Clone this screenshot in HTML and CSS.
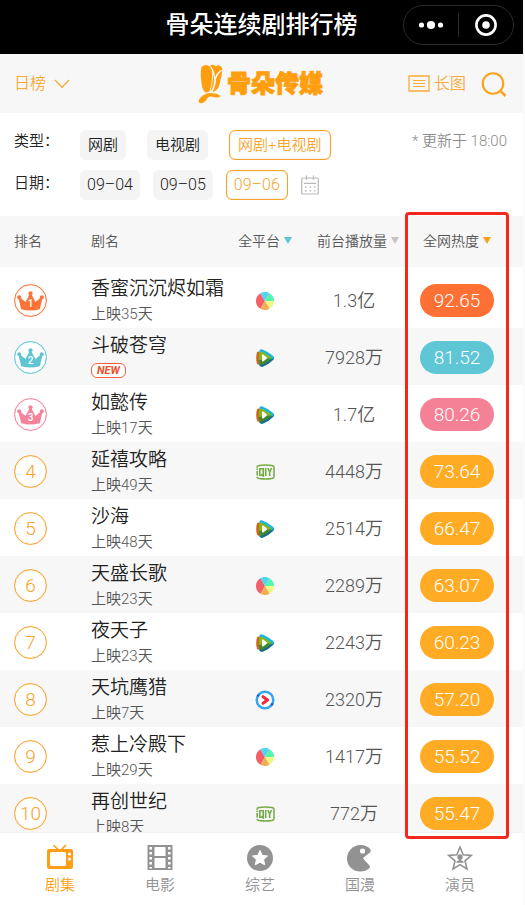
FILE: index.html
```html
<!DOCTYPE html>
<html lang="zh-CN">
<head>
<meta charset="utf-8">
<meta name="viewport" content="width=device-width, initial-scale=1">
<title>骨朵连续剧排行榜</title>
<link rel="stylesheet" href="styles.css">
</head>
<body>
<svg class="sprite" aria-hidden="true">
  <symbol id="crown" viewBox="0 0 27 20">
    <path d="M1.500 7 2.800 6.200 8.600 11 12.200 4h2.600L18.400 11 24.200 6.200 25.500 7 22.800 18.200Q13.500 20.600 4.200 18.200Z"/>
    <circle cx="13.500" cy="2.300" r="2.100"/><circle cx="2.200" cy="6.200" r="2"/><circle cx="24.800" cy="6.200" r="2"/>
  </symbol>
  <symbol id="pie" viewBox="-9 -9 18 18">
    <path fill="#f26168" d="M0 0-4.500-7.800A9 9 0 0 0-4.500 7.800Z"/>
    <path fill="#4fd5f2" d="M0 0-4.500-7.800A9 9 0 0 1 4.500-7.800Z"/>
    <path fill="#55f5ae" d="M0 0 4.500-7.800A9 9 0 0 1 9 0Z"/>
    <path fill="#f2f785" d="M0 0H9A9 9 0 0 1 4.500 7.800Z"/>
    <path fill="#f5ad55" d="M0 0 4.500 7.800A9 9 0 0 1-4.500 7.800Z"/>
  </symbol>
  <symbol id="tencent" viewBox="0 0 18 18">
    <path fill="#22b5dc" d="M3.500 1.200Q4 0 6.500.4 13 2.800 17.200 7 19 9 17.200 10.700 12.500 15.500 6.500 17.700 3.800 18 3.300 16Z"/>
    <path fill="#1b6d84" d="M3.300 14 18 9.300Q17.800 10.200 17.200 10.700 12.500 15.500 6.500 17.700 3.800 18 3.300 16Z"/>
    <path fill="#cf6420" d="M1 3.200Q1.500 2.400 3.800 2.700V15.600Q1.700 15.800 1 14.800-.6 9 1 3.200Z"/>
    <path fill="#86b81b" d="M3.300 3.300Q4 2.300 6 3 11.500 5.200 14.500 8 15.300 9 14.500 10 11.500 13 6 15.200 3.800 15.700 3.300 14.500 2.300 9 3.300 3.300Z"/>
    <path fill="#40872d" d="M3 11 14.800 9.300 14.500 10Q11.500 13 6 15.200 3.800 15.700 3.300 14.500Z"/>
    <path fill="#fff" d="M6 5.800Q6.300 5.100 7.200 5.600L10.600 8.200Q11.400 9 10.600 9.700L7.200 12.400Q6.200 12.900 6 12.100Z"/>
  </symbol>
  <symbol id="iqiyi" viewBox="0 0 19 16">
    <path fill="none" stroke="#74ab45" stroke-width="1.500" d="M1 3.800V3.300Q1 1.700 3 1.400 9.500.4 16 1.400 18 1.700 18 3.300V12.700Q18 14.300 16 14.600 9.500 15.600 3 14.600 1 14.300 1 12.700"/>
    <path fill="none" stroke="#74ab45" stroke-width="1.600" d="M1.200 4.600V6M1.200 7V11.500M3.800 4.700H7.200V11.300H3.800ZM5.800 10 7.800 12.700M9.700 4V12M11.800 4 13.700 8V12M15.600 4 13.700 8"/>
  </symbol>
  <symbol id="youku" viewBox="0 0 20 20">
    <circle cx="10" cy="10" r="8.300" fill="#fff" stroke="#37a4f2" stroke-width="2.500"/>
    <circle cx="3.300" cy="5.500" r="1.300" fill="#1e62c8"/><circle cx="16.900" cy="14.400" r="1.300" fill="#1e62c8"/>
    <path fill="none" stroke="#f22b3c" stroke-width="3" stroke-linecap="round" stroke-linejoin="round" d="M8 6.700 12.600 10 8 13.300"/>
  </symbol>
</svg>

<div class="app">
  <header class="titlebar">
    <h1 class="titlebar-title">骨朵连续剧排行榜</h1>
    <div class="capsule">
      <button class="capsule-btn" type="button" aria-label="更多">
        <svg width="26" height="10" viewBox="0 0 26 10" fill="#fff"><circle cx="3.500" cy="5" r="2.600"/><circle cx="13" cy="5" r="4.100"/><circle cx="22.500" cy="5" r="2.600"/></svg>
      </button>
      <button class="capsule-btn" type="button" aria-label="关闭">
        <svg width="24" height="24" viewBox="0 0 24 24"><circle cx="12" cy="12" r="9.600" fill="none" stroke="#fff" stroke-width="2.600"/><circle cx="12" cy="12" r="3.800" fill="#fff"/></svg>
      </button>
    </div>
  </header>

  <div class="toolbar">
    <button class="tool period" type="button">日榜
      <svg width="16" height="10" viewBox="0 0 16 10" fill="none" stroke="#f9ab3a" stroke-width="1.300"><path d="M1 1 8 8.300 15 1"/></svg>
    </button>
    <div class="brand">
      <svg width="25" height="40" viewBox="0 0 25 40" fill="#ff9f0f">
        <path d="M3.500 3Q6 .5 9.500 1.200 12.500 2 13.600 5.500 14.500 8 14 13 13.800 21 12 26 10.500 29 7.500 28.500 4.500 27 3.500 19 2 9 3.500 3Z"/>
        <path d="M12 2Q14.500.2 16.500 1.200L18 2.200Q20.500.3 22.500 2.200 24.800 3.500 24.300 5.500 19 7.500 17 13.500 16.500 8 14.700 4.800 13.800 3 12 2Z"/>
        <path d="M24.300 6.500Q24 11 22.800 14.500L21.700 20Q20.500 26 14.300 28.300 17.500 23 18 15.500 19.500 9.500 24.300 6.500Z"/>
        <path d="M15.300 10Q17 16 15.500 21 14.500 25.500 12.500 27.800 14.800 20 15.300 10Z"/>
        <path d="M1 38.500Q-.5 35.500 5 31.500 10 28 16 29.500 21 30 22.500 32.300 21 34 17.500 33.500 12 31.500 10 33.500 7 38.500 3.500 39.300 1.500 39.500 1 38.500Z"/>
      </svg>
      <span class="brand-name">骨朵传媒</span>
    </div>
    <div class="tools">
      <button class="tool" type="button">
        <svg width="22" height="17" viewBox="0 0 22 17" fill="none" stroke="#f9ab3a"><path stroke-width="1.300" d="M1 1H21V16H1Z"/><path stroke-width="1.200" d="M5 5.500H17M5 8.500H17M5 11.500H17"/></svg>
        长图
      </button>
      <button class="tool" type="button" aria-label="搜索">
        <svg width="26" height="26" viewBox="0 0 26 26" fill="none" stroke="#fba21f" stroke-width="2.100"><circle cx="12" cy="12.500" r="10.300"/><path stroke-width="2.600" d="M18.700 19.200 24.500 25"/></svg>
      </button>
    </div>
  </div>

  <section class="filters">
    <div class="filter">
      <span class="filter-label">类型：</span>
      <div class="chips chips-type">
        <button class="chip" type="button">网剧</button>
        <button class="chip" type="button">电视剧</button>
        <button class="chip active" type="button">网剧+电视剧</button>
      </div>
      <span class="updated">* 更新于 18:00</span>
    </div>
    <div class="filter">
      <span class="filter-label date">日期：</span>
      <div class="chips chips-date">
        <button class="chip" type="button">09–04</button>
        <button class="chip" type="button">09–05</button>
        <button class="chip active" type="button">09–06</button>
        <button class="calendar" type="button" aria-label="选择日期">
          <svg width="18" height="20" viewBox="0 0 18 20" fill="none" stroke="#b9b9b9" stroke-width="1.200"><rect x=".7" y="3" width="16.600" height="16" rx="1"/><path d="M5.500.5V5M12.500.5V5M3 8.300H15"/><path stroke-width="1.600" stroke-dasharray="1.600 3" d="M4 12H14.500M4 15.700H14.500"/></svg>
        </button>
      </div>
    </div>
  </section>

  <main class="board">
    <table class="ranking">
      <colgroup><col class="col-rank"><col><col class="col-platform"><col class="col-plays"><col class="col-heat"></colgroup>
      <thead>
        <tr>
          <th class="rank">排名</th>
          <th class="name">剧名</th>
          <th>全平台<i class="sort blue"></i></th>
          <th class="plays-head">前台播放量<i class="sort grey"></i></th>
          <th class="heat">全网热度<i class="sort orange"></i></th>
        </tr>
      </thead>
      <tbody>
        <tr>
          <td class="rank"><span class="medal first"><svg width="27" height="20"><use href="#crown"/></svg><b>1</b></span></td>
          <td class="name"><div class="show">香蜜沉沉烬如霜</div><div class="days">上映35天</div></td>
          <td><svg class="platform" width="18" height="18"><use href="#pie"/></svg></td>
          <td class="plays">1.3亿</td>
          <td class="heat"><span class="pill first">92.65</span></td>
        </tr>
        <tr>
          <td class="rank"><span class="medal second"><svg width="27" height="20"><use href="#crown"/></svg><b>2</b></span></td>
          <td class="name"><div class="show">斗破苍穹</div><div class="days"><span class="new">NEW</span></div></td>
          <td><svg class="platform" width="18" height="18"><use href="#tencent"/></svg></td>
          <td class="plays">7928万</td>
          <td class="heat"><span class="pill second">81.52</span></td>
        </tr>
        <tr>
          <td class="rank"><span class="medal third"><svg width="27" height="20"><use href="#crown"/></svg><b>3</b></span></td>
          <td class="name"><div class="show">如懿传</div><div class="days">上映17天</div></td>
          <td><svg class="platform" width="18" height="18"><use href="#tencent"/></svg></td>
          <td class="plays">1.7亿</td>
          <td class="heat"><span class="pill third">80.26</span></td>
        </tr>
        <tr>
          <td class="rank"><span class="medal">4</span></td>
          <td class="name"><div class="show">延禧攻略</div><div class="days">上映49天</div></td>
          <td><svg class="platform" width="19" height="16"><use href="#iqiyi"/></svg></td>
          <td class="plays">4448万</td>
          <td class="heat"><span class="pill">73.64</span></td>
        </tr>
        <tr>
          <td class="rank"><span class="medal">5</span></td>
          <td class="name"><div class="show">沙海</div><div class="days">上映48天</div></td>
          <td><svg class="platform" width="18" height="18"><use href="#tencent"/></svg></td>
          <td class="plays">2514万</td>
          <td class="heat"><span class="pill">66.47</span></td>
        </tr>
        <tr>
          <td class="rank"><span class="medal">6</span></td>
          <td class="name"><div class="show">天盛长歌</div><div class="days">上映23天</div></td>
          <td><svg class="platform" width="18" height="18"><use href="#pie"/></svg></td>
          <td class="plays">2289万</td>
          <td class="heat"><span class="pill">63.07</span></td>
        </tr>
        <tr>
          <td class="rank"><span class="medal">7</span></td>
          <td class="name"><div class="show">夜天子</div><div class="days">上映23天</div></td>
          <td><svg class="platform" width="18" height="18"><use href="#tencent"/></svg></td>
          <td class="plays">2243万</td>
          <td class="heat"><span class="pill">60.23</span></td>
        </tr>
        <tr>
          <td class="rank"><span class="medal">8</span></td>
          <td class="name"><div class="show">天坑鹰猎</div><div class="days">上映7天</div></td>
          <td><svg class="platform" width="20" height="20"><use href="#youku"/></svg></td>
          <td class="plays">2320万</td>
          <td class="heat"><span class="pill">57.20</span></td>
        </tr>
        <tr>
          <td class="rank"><span class="medal">9</span></td>
          <td class="name"><div class="show">惹上冷殿下</div><div class="days">上映29天</div></td>
          <td><svg class="platform" width="18" height="18"><use href="#pie"/></svg></td>
          <td class="plays">1417万</td>
          <td class="heat"><span class="pill">55.52</span></td>
        </tr>
        <tr>
          <td class="rank"><span class="medal">10</span></td>
          <td class="name"><div class="show">再创世纪</div><div class="days">上映8天</div></td>
          <td><svg class="platform" width="19" height="16"><use href="#iqiyi"/></svg></td>
          <td class="plays">772万</td>
          <td class="heat"><span class="pill">55.47</span></td>
        </tr>
      </tbody>
    </table>
  </main>

  <nav class="tabs">
    <a class="tab current" href="#drama">
      <svg width="28" height="28" viewBox="0 0 28 28"><path fill="none" stroke="currentColor" stroke-width="1.600" d="M7.500 1 13 6.500M20 1 14.500 6.500"/><path fill="currentColor" fill-rule="evenodd" d="M3 5H25Q27 5 27 7V23Q27 25 25 25H3Q1 25 1 23V7Q1 5 3 5ZM5.500 8Q4 8 4 9.500V20.500Q4 22 5.500 22H18.500Q20 22 20 20.500V9.500Q20 8 18.500 8Z"/><circle cx="23.500" cy="10" r="1.500" fill="#fff"/><circle cx="23.500" cy="15" r="1.500" fill="#fff"/></svg>
      剧集</a>
    <a class="tab" href="#movie">
      <svg width="28" height="28" viewBox="0 0 28 28"><path fill="currentColor" d="M1.500 1H26.500V26H1.500Z"/><path fill="#fff" d="M8.500 3H19.500V12H8.500ZM8.500 14H19.500V24H8.500Z"/><path fill="none" stroke="#fff" stroke-width="2.600" stroke-dasharray="2.600 2.400" d="M4.700 3V24.500M23.300 3V24.500"/></svg>
      电影</a>
    <a class="tab" href="#variety">
      <svg width="28" height="28" viewBox="0 0 28 28"><circle cx="14" cy="14" r="13" fill="currentColor"/><path fill="#fff" stroke="#fff" stroke-linejoin="round" d="M14 6.500 16.200 11.400 21.500 12 17.600 15.600 18.700 20.800 14 18.200 9.300 20.800 10.400 15.600 6.500 12 11.800 11.400Z"/></svg>
      综艺</a>
    <a class="tab" href="#anime">
      <svg width="28" height="28" viewBox="0 0 28 28"><path fill="currentColor" d="M24.500 5.500Q21 1 14.500 1 8.500 1 4.500 5.500 1 9.500 1 14.500 1 20 5 24 9 27.500 14 27.500 20 27.500 23.500 24 24.500 23 23.500 21.500L17.500 15Q17 14.300 17.500 13.500L24 8.500Q25.300 7 24.500 5.500Z"/><circle cx="16.500" cy="7" r="2.600" fill="#fff"/></svg>
      国漫</a>
    <a class="tab" href="#actor">
      <svg width="28" height="28" viewBox="0 0 28 28"><path fill="none" stroke="currentColor" stroke-width="1.600" d="M14 3 17.200 10.800 25.300 11.400 19 16.800 21 25 14 20.600 7 25 9 16.800 2.700 11.400 10.800 10.800Z"/><circle cx="14" cy="13" r="2.700" fill="currentColor"/><path fill="currentColor" d="M13 15H15V16.300L17.600 17.500V18.700H10.400V17.500L13 16.300Z"/></svg>
      演员</a>
  </nav>

  <div class="highlight" aria-hidden="true"></div>
</div>
</body>
</html>
```

FILE: styles.css
```css
* { box-sizing: border-box; }

body {
  margin: 0;
  padding-right: 2px;
  background: #fafafa;
  color: #222;
  font-family: Roboto, "Noto Sans CJK SC", sans-serif;
  font-size: 15px;
  font-weight: 350;
}

button {
  margin: 0;
  padding: 0;
  border: 0;
  background: none;
  color: inherit;
  font: inherit;
  cursor: pointer;
}

svg { display: block; flex: none; }
.sprite { position: absolute; width: 0; height: 0; }

.app {
  position: relative;
  display: flex;
  flex-direction: column;
  height: 100vh;
  background: #fff;
}

/* Title bar */
.titlebar {
  display: grid;
  grid-template-columns: 1fr auto 1fr;
  align-items: center;
  height: 54px;
  padding: 0 9px 4px;
  background: #000;
  color: #fff;
}
.titlebar-title {
  grid-column: 2;
  margin: 0;
  font-size: 24px;
  font-weight: 500;
  line-height: 40px;
}
.capsule {
  display: flex;
  align-items: center;
  justify-self: end;
  width: 111px;
  height: 40px;
  border: 1px solid #2b2b2b;
  border-radius: 20px;
}
.capsule-btn {
  display: flex;
  flex: 1;
  align-items: center;
  justify-content: center;
  height: 24px;
}
.capsule-btn + .capsule-btn { border-left: 1px solid #2b2b2b; }

/* Toolbar */
.toolbar {
  display: grid;
  grid-template-columns: 1fr auto 1fr;
  align-items: center;
  height: 59px;
  padding: 0 16px 0 14px;
  background: #f7f7f7;
}
.tool {
  display: flex;
  align-items: center;
  gap: 4px;
  color: #f9ab3a;
  font-size: 16px;
  line-height: 24px;
}
.period { gap: 8px; }
.brand {
  display: flex;
  align-items: center;
  gap: 4px;
  color: #ff9f0f;
}
.brand-name {
  font-size: 24px;
  font-weight: 900;
  line-height: 32px;
  -webkit-text-stroke: 1px #ff9f0f;
}
.tools {
  display: flex;
  align-items: center;
  justify-self: end;
  gap: 15px;
}

/* Filters */
.filters {
  display: flex;
  flex-direction: column;
  gap: 10px;
  padding: 17px 16px 16px 14px;
}
.filter { display: flex; align-items: flex-start; }
.filter-label { width: 66px; line-height: 22px; }
.filter-label.date { line-height: 26px; }
.chips { display: flex; align-items: center; }
.chips-type { gap: 21px; }
.chips-date { gap: 13px; font-size: 16px; }
.chip {
  height: 30px;
  padding: 0 8px;
  border-radius: 6px;
  background: #f4f4f4;
  line-height: 30px;
}
.chips-date .chip { padding: 0 7px; }
.chip.active {
  border: 1px solid #f8a22b;
  background: #fff;
  box-shadow: inset 0 0 1px #f8a22b;
  color: #f9a42b;
  line-height: 28px;
}
.updated {
  margin-left: auto;
  color: #8c8c8c;
  line-height: 22px;
}

/* Ranking table */
.board {
  flex: 1;
  min-height: 0;
  overflow: hidden;
}
.ranking {
  width: 100%;
  border-collapse: collapse;
  table-layout: fixed;
}
.col-rank { width: 91px; }
.col-platform { width: 72px; }
.col-plays { width: 106px; }
.col-heat { width: 116px; }
th, td { padding: 0; text-align: center; }
th {
  height: 51px;
  padding-bottom: 4px;
  background: #f7f7f7;
  color: #555;
  font-size: 14px;
  font-weight: 350;
  white-space: nowrap;
}
td { height: 57px; padding-top: 2px; }
td.plays { padding: 0 0 2px; }
tbody tr:first-child td { height: 61px; padding-top: 6px; }
tbody tr:first-child td.plays { padding-top: 4px; }
tbody tr:nth-child(even) { background: #f7f7f7; }
.rank { padding-left: 14px; text-align: left; }
.name { text-align: left; }
th.plays-head { padding-left: 8px; }
.heat { padding-right: 16px; }

.sort {
  display: inline-block;
  margin-left: 4px;
  border: 4px solid transparent;
  border-top: 7px solid;
  border-bottom: 0;
  vertical-align: 2px;
}
.blue { color: #5bc5d3; }
.grey { color: #c4c4c4; }
.orange { color: #f9a01b; }

.medal {
  position: relative;
  display: flex;
  align-items: center;
  justify-content: center;
  width: 33px;
  height: 33px;
  border: 1px solid;
  border-radius: 50%;
  background: #fff;
  box-shadow: inset 0 0 1px;
  color: #f9a22b;
  font-size: 19px;
}
.medal svg { fill: currentColor; }
.medal b {
  position: absolute;
  inset: 12px 0 0;
  color: #fff;
  font-size: 10px;
  font-weight: 500;
  line-height: 14px;
  text-align: center;
}
.medal.first { color: #fb7337; }
.medal.second { color: #5fc5d5; }
.medal.third { color: #f4849a; }

.show { font-size: 19px; line-height: 26px; }
.days {
  display: flex;
  align-items: center;
  height: 24px;
  color: #555;
  line-height: 24px;
}
.new {
  height: 15px;
  padding: 0 5px;
  border: 1px solid #f0613e;
  border-radius: 6px;
  background: #fff;
  color: #ee4f2b;
  font-size: 11px;
  font-style: italic;
  font-weight: 700;
  line-height: 13px;
}
.platform { margin: 0 auto; }
.plays { color: #555; font-size: 18px; }
.pill {
  display: block;
  width: 74px;
  margin: 0 auto;
  border-radius: 17px;
  background: #ffab24;
  color: #fff;
  font-size: 19px;
  line-height: 33px;
}
.pill.first { background: #fe7033; }
.pill.second { background: #5fc6d6; }
.pill.third { background: #f58196; }

/* Bottom tabs */
.tabs {
  display: grid;
  grid-template-columns: repeat(5, 1fr);
  height: 73px;
  padding: 11px 13px 0 10px;
  border-top: 1px solid #f0f0f0;
}
.tab {
  display: flex;
  flex-direction: column;
  align-items: center;
  gap: 2px;
  color: #929292;
  line-height: 22px;
  text-decoration: none;
}
.tab.current { color: #fc9f16; }

/* Frame over the heat column */
.highlight {
  position: absolute;
  top: 212px;
  right: 14px;
  bottom: 66px;
  width: 104px;
  border: 3px solid #f3281c;
  border-radius: 4px;
  pointer-events: none;
}
```
